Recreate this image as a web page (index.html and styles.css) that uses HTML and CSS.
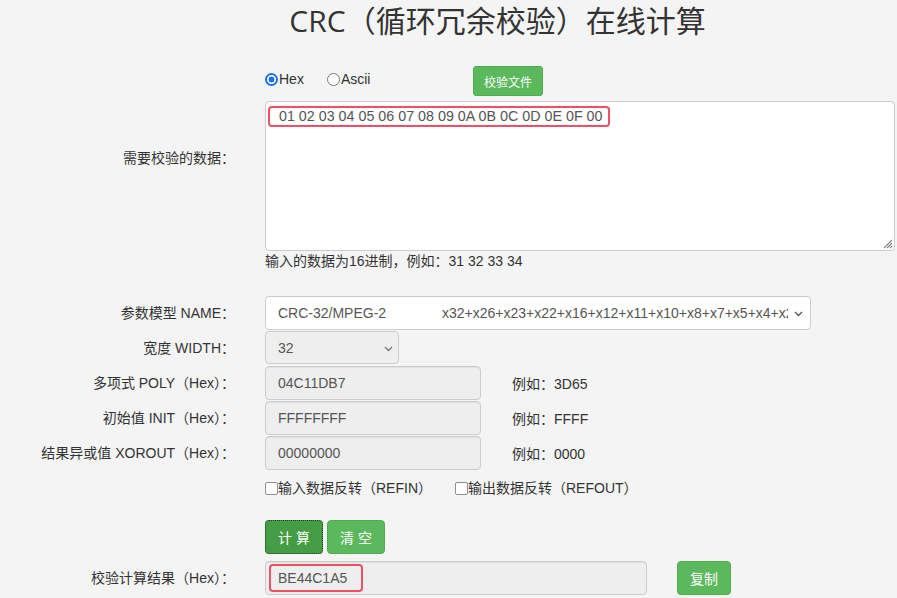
FILE: index.html
```html
<!DOCTYPE html>
<html lang="zh-CN">
<head>
<meta charset="utf-8">
<title>CRC在线计算</title>
<link rel="stylesheet" href="styles.css">
</head>
<body>
<div class="page">
  <h1 class="title">CRC（循环冗余校验）在线计算</h1>
  <form class="form">
    <div class="row row-data">
      <label class="lbl lbl-data">需要校验的数据：</label>
      <div class="ctl">
        <div class="opts">
          <div class="radios">
            <span class="radio radio-on"></span><span class="opt-text">Hex</span>
            <span class="radio radio-off"></span><span class="opt-text">Ascii</span>
          </div>
          <button type="button" class="btn btn-sm">校验文件</button>
        </div>
        <div class="textarea">
          <span class="mark mark-data">01 02 03 04 05 06 07 08 09 0A 0B 0C 0D 0E 0F 00</span>
          <svg class="grip" width="12" height="12" viewBox="0 0 12 12"><path d="M11 3 L3 11 M11 6 L6 11 M11 9 L9 11" stroke="#8a8a8a" stroke-width="1.2" fill="none"/></svg>
        </div>
        <p class="help">输入的数据为16进制，例如：31 32 33 34</p>
      </div>
    </div>

    <div class="row row-name">
      <label class="lbl">参数模型 NAME：</label>
      <div class="ctl">
        <div class="select select-name">
          <span class="sel-name">CRC-32/MPEG-2</span><span class="sel-poly">x32+x26+x23+x22+x16+x12+x11+x10+x8+x7+x5+x4+x2+x1+1</span>
          <svg class="chev" width="9" height="6" viewBox="0 0 9 6"><path d="M1 1 L4.5 4.5 L8 1" stroke="#555" stroke-width="1.3" fill="none"/></svg>
        </div>
      </div>
    </div>

    <div class="row">
      <label class="lbl">宽度 WIDTH：</label>
      <div class="ctl">
        <div class="select select-width">
          <span class="sel-name">32</span>
          <svg class="chev" width="9" height="6" viewBox="0 0 9 6"><path d="M1 1 L4.5 4.5 L8 1" stroke="#777" stroke-width="1.3" fill="none"/></svg>
        </div>
      </div>
    </div>

    <div class="row">
      <label class="lbl">多项式 POLY（Hex）：</label>
      <div class="ctl ctl-inline">
        <div class="input input-short">04C11DB7</div>
        <span class="example">例如：3D65</span>
      </div>
    </div>

    <div class="row">
      <label class="lbl">初始值 INIT（Hex）：</label>
      <div class="ctl ctl-inline">
        <div class="input input-short">FFFFFFFF</div>
        <span class="example">例如：FFFF</span>
      </div>
    </div>

    <div class="row">
      <label class="lbl">结果异或值 XOROUT（Hex）：</label>
      <div class="ctl ctl-inline">
        <div class="input input-short">00000000</div>
        <span class="example">例如：0000</span>
      </div>
    </div>

    <div class="row row-check">
      <div class="lbl"></div>
      <div class="ctl ctl-inline">
        <span class="check-item check-first"><span class="checkbox"></span>输入数据反转（REFIN）</span>
        <span class="check-item"><span class="checkbox"></span>输出数据反转（REFOUT）</span>
      </div>
    </div>

    <div class="row row-buttons">
      <div class="lbl"></div>
      <div class="ctl ctl-inline">
        <button type="button" class="btn btn-md btn-active">计 算</button>
        <button type="button" class="btn btn-md">清 空</button>
      </div>
    </div>

    <div class="row row-result">
      <label class="lbl">校验计算结果（Hex）：</label>
      <div class="ctl ctl-inline">
        <div class="input input-result"><span class="mark mark-result">BE44C1A5</span></div>
        <button type="button" class="btn btn-copy">复制</button>
      </div>
    </div>
  </form>
</div>
</body>
</html>
```

FILE: styles.css
```css
* {
  box-sizing: border-box;
}

html, body {
  margin: 0;
  padding: 0;
  background: #f4f4f4;
}

body {
  font-family: "Liberation Sans", Arial, "Noto Sans CJK SC", sans-serif;
  font-size: 14px;
  color: #333;
  width: 897px;
  height: 598px;
  overflow: hidden;
}

.title {
  margin: 0;
  height: 42px;
  line-height: 42px;
  font-size: 30px;
  font-weight: normal;
  text-align: center;
  padding-left: 98px;
  color: #333;
  font-family: "Open Sans", "Liberation Sans", "Noto Sans CJK SC", sans-serif;
}

.form {
  margin: 0;
}

.row {
  display: flex;
  align-items: flex-start;
  margin-top: 1px;
}

.lbl {
  flex: 0 0 250px;
  text-align: right;
  padding-right: 15px;
  line-height: 34px;
  height: 34px;
  white-space: nowrap;
}

.ctl {
  flex: 1;
  padding-left: 15px;
  min-width: 0;
}

.ctl-inline {
  display: flex;
  align-items: center;
}

/* data block */
.row-data {
  margin-top: 24px;
}

.lbl-data {
  height: auto;
  line-height: 20px;
  padding-top: 82px;
}

.opts {
  display: flex;
  align-items: center;
  height: 30px;
}

.radios {
  display: flex;
  align-items: center;
  width: 208px;
  margin-top: -4px;
}

.radio {
  width: 13px;
  height: 13px;
  border-radius: 50%;
  display: inline-block;
  flex: 0 0 13px;
}

.radio-on {
  border: 2px solid #1a73e8;
  background: radial-gradient(circle, #1a73e8 0 2.8px, #fff 3.2px);
}

.radio-off {
  border: 1px solid #767676;
  background: #fff;
  margin-left: 23px;
}

.opt-text {
  margin-left: 1px;
}

.btn {
  font-family: "Liberation Sans", Arial, "Noto Sans CJK SC", sans-serif;
  color: #fff;
  background: #5cb85c;
  border: 1px solid #4cae4c;
  border-radius: 4px;
  cursor: pointer;
  padding: 0;
  margin: 0;
}

.btn-sm {
  width: 70px;
  height: 30px;
  font-size: 12px;
  border-radius: 3px;
}

.textarea {
  position: relative;
  margin-top: 5px;
  width: 630px;
  height: 150px;
  background: #fff;
  border: 1px solid #ccc;
  border-radius: 4px;
  padding: 4px 2px;
  color: #555;
}

.mark {
  display: inline-block;
  border: 2px solid #ef4f67;
  border-radius: 4px;
  color: #555;
}

.mark-data {
  font-size: 14.3px;
  line-height: 17px;
  padding: 0 5px 0 9px;
}

.grip {
  position: absolute;
  right: 1px;
  bottom: 1px;
}

.help {
  margin: 0;
  line-height: 20px;
}

/* select-like */
.row-name {
  margin-top: 25px;
}

.select {
  position: relative;
  height: 34px;
  border: 1px solid #ccc;
  border-radius: 4px;
  display: flex;
  align-items: center;
  padding-left: 12px;
  color: #555;
  white-space: nowrap;
  overflow: hidden;
}

.select-name {
  width: 546px;
  background: #fff;
  padding-right: 22px;
}

.select-width {
  width: 134px;
  height: 33px;
  background: #eee;
}

.sel-name {
  flex: 0 0 auto;
}

.select-name .sel-name {
  width: 164px;
}

.sel-poly {
  overflow: hidden;
  flex: 1;
  min-width: 0;
}

.chev {
  position: absolute;
  right: 7px;
  top: 14px;
}

.select-width .chev {
  right: 5px;
}

/* inputs */
.input {
  height: 34px;
  border: 1px solid #ccc;
  border-radius: 4px;
  background: #eee;
  color: #555;
  padding-left: 12px;
  line-height: 32px;
  box-shadow: inset 0 1px 1px rgba(0, 0, 0, 0.06);
}

.input-short {
  width: 216px;
}

.example {
  margin-left: 31px;
}

/* checkboxes */
.row-check {
  margin-top: 8px;
}

.row-check .lbl {
  height: 20px;
}

.check-item {
  display: flex;
  align-items: center;
  line-height: 20px;
}

.check-first {
  width: 190px;
}

.checkbox {
  width: 13px;
  height: 13px;
  border: 1px solid #8f8f8f;
  border-radius: 2px;
  background: #fff;
  display: inline-block;
  flex: 0 0 13px;
}

/* buttons */
.row-buttons {
  margin-top: 22px;
}

.btn-md {
  width: 58px;
  height: 34px;
  font-size: 14px;
  margin-right: 4px;
}

.btn-active {
  background: #449d44;
  border: 1px dotted #1f3f1f;
}

/* result */
.row-result {
  margin-top: 7px;
}

.input-result {
  width: 382px;
  padding-left: 3px;
  padding-top: 2px;
  line-height: normal;
}

.mark-result {
  width: 94px;
  height: 28px;
  line-height: 24px;
  padding-left: 7px;
}

.btn-copy {
  width: 54px;
  height: 34px;
  font-size: 14px;
  margin-left: 30px;
}
```
